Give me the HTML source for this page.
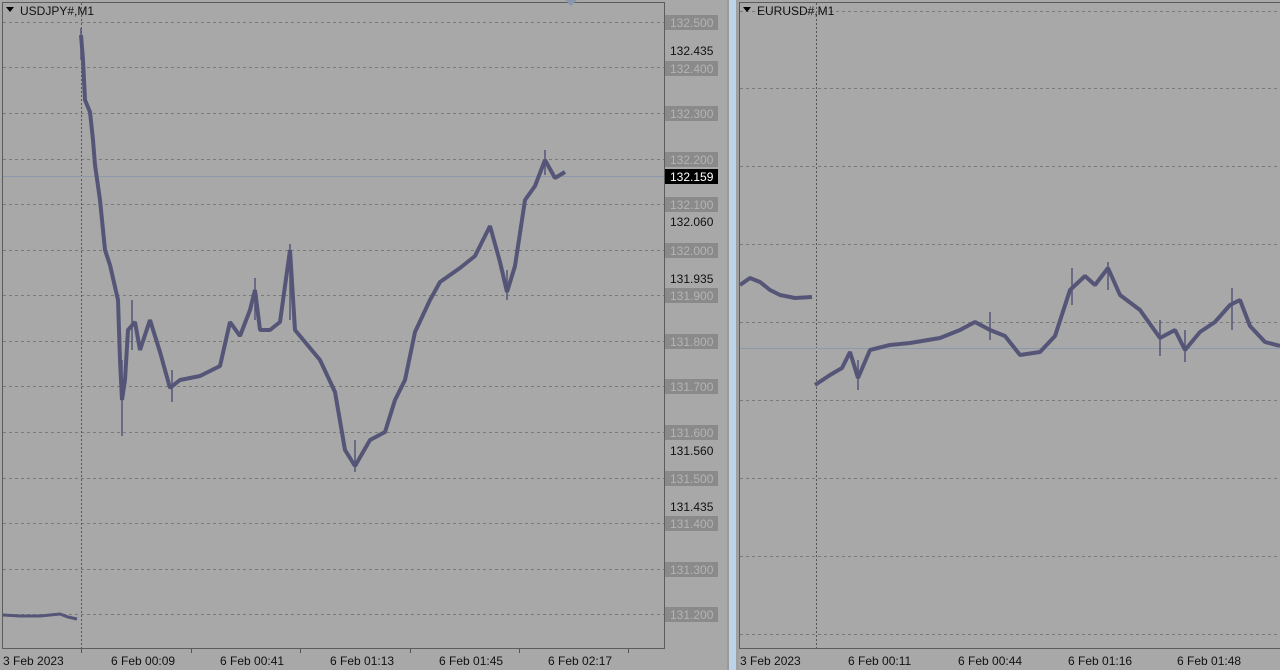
<!DOCTYPE html>
<html><head><meta charset="utf-8"><style>
body{margin:0;width:1280px;height:670px;overflow:hidden;background:#a8a8a8;font-family:"Liberation Sans",sans-serif}
svg{position:absolute;left:0;top:0}
</style></head><body>
<svg width="1280" height="670" xmlns="http://www.w3.org/2000/svg" font-family="Liberation Sans, sans-serif">
<rect width="1280" height="670" fill="#a8a8a8"/>
<rect x="727" y="0" width="2" height="670" fill="#9a9a9a"/>
<rect x="729" y="0" width="7" height="670" fill="#bcd3ea"/>
<rect x="736" y="0" width="3" height="670" fill="#a0a0a0"/>
<rect x="2.5" y="2.5" width="662" height="646" fill="none" stroke="#5c5c5c"/>
<g stroke="#7a7a7a" stroke-dasharray="3,3" stroke-width="1">
<line x1="3" x2="664" y1="22.5" y2="22.5"/><line x1="3" x2="664" y1="67.5" y2="67.5"/><line x1="3" x2="664" y1="113.5" y2="113.5"/><line x1="3" x2="664" y1="159.5" y2="159.5"/><line x1="3" x2="664" y1="204.5" y2="204.5"/><line x1="3" x2="664" y1="250.5" y2="250.5"/><line x1="3" x2="664" y1="295.5" y2="295.5"/><line x1="3" x2="664" y1="341.5" y2="341.5"/><line x1="3" x2="664" y1="386.5" y2="386.5"/><line x1="3" x2="664" y1="432.5" y2="432.5"/><line x1="3" x2="664" y1="478.5" y2="478.5"/><line x1="3" x2="664" y1="523.5" y2="523.5"/><line x1="3" x2="664" y1="569.5" y2="569.5"/><line x1="3" x2="664" y1="614.5" y2="614.5"/>
</g>
<line x1="81.5" x2="81.5" y1="3" y2="648" stroke="#555" stroke-dasharray="2,2"/>
<line x1="3" x2="664" y1="176.5" y2="176.5" stroke="#8c98ac"/>
<path d="M565 0 l12 0 l-6 6z" fill="#8a96aa"/>
<path d="M6 7 h8 l-4 5z" fill="#000"/>
<text x="20" y="15" font-size="12" fill="#111">USDJPY#,M1</text>
<polyline fill="none" stroke="#555578" stroke-width="3" points="3,615 20,616 40,616 60,614 68,617 77,619"/>
<g stroke="#555578" stroke-width="4" fill="none" stroke-linejoin="bevel">
<polyline points="81,35 83,60 85,100 90,112 93,140 95,165 100,200 105,250 110,265 118,300 120,360 122,400 125,380 128,330 135,322 140,350 150,320 160,352 170,388 180,380 200,376 220,366 230,322 240,336 250,310 255,290 260,330 270,330 280,322 290,250 295,330 305,342 320,360 335,392 345,450 355,466 370,440 385,432 395,400 405,380 415,332 430,300 440,282 460,268 475,256 490,226 500,262 507,292 515,266 525,200 535,186 545,160 555,178 565,172"/>
</g>
<g stroke="#555578" stroke-width="1.5">
<line x1="81" y1="28" x2="81" y2="60"/><line x1="122" y1="360" x2="122" y2="436"/><line x1="132" y1="300" x2="132" y2="350"/><line x1="290" y1="244" x2="290" y2="320"/><line x1="355" y1="440" x2="355" y2="472"/><line x1="545" y1="150" x2="545" y2="175"/><line x1="507" y1="270" x2="507" y2="300"/><line x1="255" y1="278" x2="255" y2="320"/><line x1="172" y1="370" x2="172" y2="402"/>
</g>
<g font-size="12">
<g fill="#8a8a8a"><rect x="665" y="15" width="53" height="15"/><rect x="665" y="61" width="53" height="15"/><rect x="665" y="106" width="53" height="15"/><rect x="665" y="152" width="53" height="15"/><rect x="665" y="197" width="53" height="15"/><rect x="665" y="243" width="53" height="15"/><rect x="665" y="288" width="53" height="15"/><rect x="665" y="334" width="53" height="15"/><rect x="665" y="379" width="53" height="15"/><rect x="665" y="425" width="53" height="15"/><rect x="665" y="471" width="53" height="15"/><rect x="665" y="516" width="53" height="15"/><rect x="665" y="562" width="53" height="15"/><rect x="665" y="607" width="53" height="15"/></g>
<rect x="665" y="169" width="53" height="15" fill="#000"/>
<g fill="#b4b4b4"><text x="670" y="27">132.500</text><text x="670" y="73">132.400</text><text x="670" y="118">132.300</text><text x="670" y="164">132.200</text><text x="670" y="209">132.100</text><text x="670" y="255">132.000</text><text x="670" y="300">131.900</text><text x="670" y="346">131.800</text><text x="670" y="391">131.700</text><text x="670" y="437">131.600</text><text x="670" y="483">131.500</text><text x="670" y="528">131.400</text><text x="670" y="574">131.300</text><text x="670" y="619">131.200</text></g>
<text x="670" y="181" fill="#fff">132.159</text>
<g fill="#111"><text x="670" y="55">132.435</text><text x="670" y="226">132.060</text><text x="670" y="283">131.935</text><text x="670" y="455">131.560</text><text x="670" y="511">131.435</text></g>
</g>
<g font-size="12" fill="#111"><text x="3" y="665">3 Feb 2023</text><text x="111" y="665">6 Feb 00:09</text><text x="220" y="665">6 Feb 00:41</text><text x="330" y="665">6 Feb 01:13</text><text x="439" y="665">6 Feb 01:45</text><text x="548" y="665">6 Feb 02:17</text></g>
<g stroke="#555"><line x1="81.5" x2="81.5" y1="649" y2="653"/><line x1="191.5" x2="191.5" y1="649" y2="653"/><line x1="300.5" x2="300.5" y1="649" y2="653"/><line x1="410.5" x2="410.5" y1="649" y2="653"/><line x1="519.5" x2="519.5" y1="649" y2="653"/><line x1="628.5" x2="628.5" y1="649" y2="653"/></g>
<rect x="739.5" y="2.5" width="545" height="646" fill="none" stroke="#5c5c5c"/>
<g stroke="#7a7a7a" stroke-dasharray="3,3">
<line x1="740" x2="1280" y1="11.5" y2="11.5"/><line x1="740" x2="1280" y1="88.5" y2="88.5"/><line x1="740" x2="1280" y1="166.5" y2="166.5"/><line x1="740" x2="1280" y1="244.5" y2="244.5"/><line x1="740" x2="1280" y1="322.5" y2="322.5"/><line x1="740" x2="1280" y1="400.5" y2="400.5"/><line x1="740" x2="1280" y1="478.5" y2="478.5"/><line x1="740" x2="1280" y1="556.5" y2="556.5"/><line x1="740" x2="1280" y1="634.5" y2="634.5"/>
</g>
<line x1="816.5" x2="816.5" y1="3" y2="648" stroke="#555" stroke-dasharray="2,2"/>
<line x1="740" x2="1280" y1="348.5" y2="348.5" stroke="#8c98ac"/>
<path d="M743 7 h8 l-4 5z" fill="#000"/>
<text x="757" y="15" font-size="12" fill="#111">EURUSD#,M1</text>
<g stroke="#555578" stroke-width="4" fill="none" stroke-linejoin="bevel">
<polyline points="740,285 750,278 760,282 770,290 780,295 795,298 812,297"/>
<polyline points="815,385 830,375 842,368 850,352 858,378 870,350 890,345 910,343 940,338 960,330 975,322 990,330 1005,336 1020,355 1040,352 1055,336 1070,290 1085,276 1095,285 1108,268 1120,295 1140,310 1160,338 1175,330 1185,350 1200,332 1215,322 1230,305 1240,300 1250,326 1265,342 1280,346"/>
</g>
<g stroke="#555578" stroke-width="1.5">
<line x1="858" y1="360" x2="858" y2="390"/><line x1="1108" y1="262" x2="1108" y2="290"/><line x1="1160" y1="320" x2="1160" y2="356"/><line x1="1185" y1="330" x2="1185" y2="362"/><line x1="1232" y1="288" x2="1232" y2="330"/><line x1="990" y1="312" x2="990" y2="340"/><line x1="1072" y1="268" x2="1072" y2="305"/>
</g>
<g font-size="12" fill="#111"><text x="740" y="665">3 Feb 2023</text><text x="848" y="665">6 Feb 00:11</text><text x="958" y="665">6 Feb 00:44</text><text x="1068" y="665">6 Feb 01:16</text><text x="1177" y="665">6 Feb 01:48</text></g>
</svg>
</body></html>
